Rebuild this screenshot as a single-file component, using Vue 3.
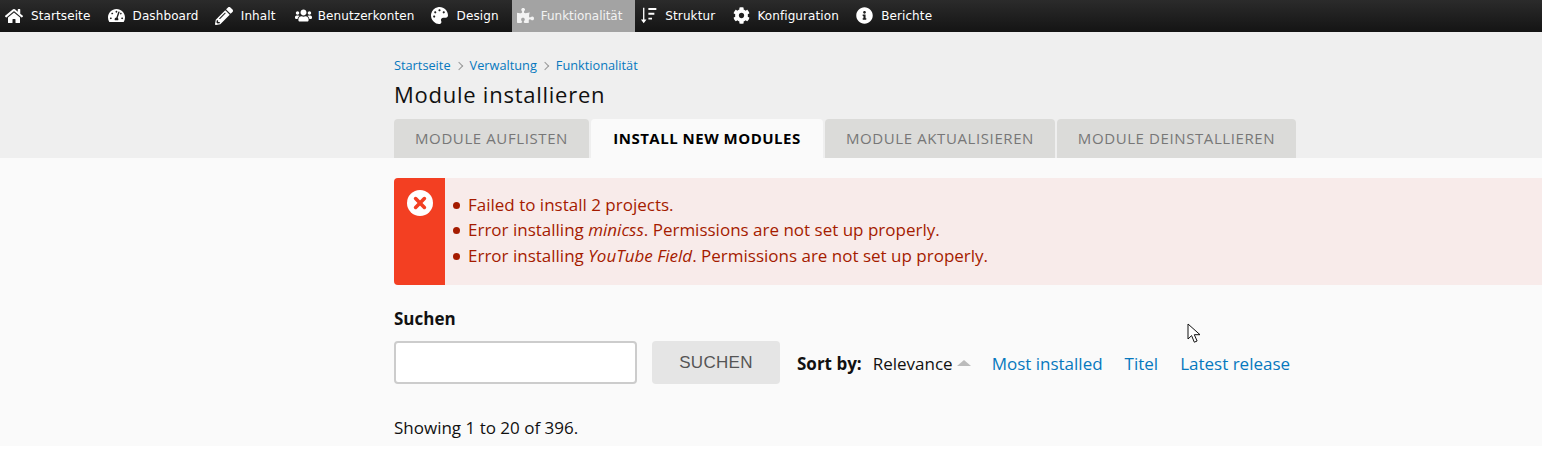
<template>
  <div class="page">
    <nav class="toolbar">
      <a v-for="item in menu" :key="item.label" class="tool" :class="{ active: item.active }">
        <svg class="tool-icon" :style="{ left: item.left + 'px', width: item.size + 'px', height: item.size + 'px' }" :viewBox="item.box">
          <path :d="item.d" fill="currentColor" />
        </svg>
        {{ item.label }}
      </a>
    </nav>

    <header class="head">
      <div class="wrap">
        <ol class="crumbs">
          <li><a>Startseite</a></li>
          <li><a>Verwaltung</a></li>
          <li><a>Funktionalität</a></li>
        </ol>
        <h1>Module installieren</h1>
        <ul class="tabs">
          <li v-for="tab in tabs" :key="tab.label" :class="{ current: tab.current }" :style="{ width: tab.width + 'px' }">{{ tab.label }}</li>
        </ul>
      </div>
    </header>

    <main class="content">
      <div class="message">
        <div class="message-side">
          <svg width="26" height="26" viewBox="0 0 26 26">
            <circle cx="13" cy="13" r="13" fill="#fff" />
            <path d="M8.6 8.6l8.8 8.8M17.4 8.6l-8.8 8.8" stroke="#f33f22" stroke-width="3.6" stroke-linecap="round" />
          </svg>
        </div>
        <ul>
          <li>Failed to install 2 projects.</li>
          <li>Error installing <em>minicss</em>. Permissions are not set up properly.</li>
          <li>Error installing <em>YouTube Field</em>. Permissions are not set up properly.</li>
        </ul>
      </div>

      <label class="search-label" for="search">Suchen</label>
      <div class="search-row">
        <input id="search" type="text" />
        <button type="button">SUCHEN</button>
        <div class="sort">
          <strong>Sort by:</strong>
          <span class="sort-current">Relevance<i class="arrow"></i></span>
          <a>Most installed</a>
          <a>Titel</a>
          <a>Latest release</a>
        </div>
      </div>

      <p class="count">Showing 1 to 20 of 396.</p>

      <svg class="cursor" width="15" height="21" viewBox="0 0 15 21">
        <path d="M1 1v15l3.6-3.4 2.7 6.6 2.8-1.2-2.8-6.3H13z" fill="#fff" stroke="#111" stroke-width="1" />
      </svg>
    </main>
  </div>
</template>

<script setup>
const menu = [
  { label: 'Startseite', left: 3, size: 18, box: '0 0 576 512', d: 'M280.37 148.26L96 300.11V464a16 16 0 0 0 16 16l112.06-.29a16 16 0 0 0 15.92-16V368a16 16 0 0 1 16-16h64a16 16 0 0 1 16 16v95.64a16 16 0 0 0 16 16.05L464 480a16 16 0 0 0 16-16V300L295.67 148.26a12.19 12.19 0 0 0-15.3 0zM571.6 251.47L488 182.56V44.05a12 12 0 0 0-12-12h-56a12 12 0 0 0-12 12v72.61L318.47 43a48 48 0 0 0-61 0L4.34 251.47a12 12 0 0 0-1.6 16.9l25.5 31A12 12 0 0 0 45.15 301l235.22-193.74a12.19 12.19 0 0 1 15.3 0L530.9 301a12 12 0 0 0 16.9-1.6l25.5-31a12 12 0 0 0-1.7-16.93z' },
  { label: 'Dashboard', left: 4, size: 17, box: '0 0 576 512', d: 'M288 32C128.94 32 0 160.94 0 320c0 52.8 14.25 102.26 39.06 144.8 5.61 9.62 16.3 15.2 27.44 15.2h443c11.14 0 21.83-5.58 27.44-15.2C561.75 422.26 576 372.8 576 320c0-159.06-128.94-288-288-288zm0 64c14.71 0 26.58 10.13 30.32 23.65-1.11 2.26-2.64 4.23-3.45 6.67l-9.22 27.67c-5.13 3.49-10.97 6.01-17.64 6.01-17.67 0-32-14.33-32-32S270.33 96 288 96zM96 384c-17.67 0-32-14.33-32-32s14.33-32 32-32 32 14.33 32 32-14.33 32-32 32zm48-160c-17.67 0-32-14.33-32-32s14.33-32 32-32 32 14.33 32 32-14.33 32-32 32zm246.77-72.41l-61.33 184C343.13 347.33 352 364.54 352 384c0 11.72-3.38 22.55-8.88 32H232.88c-5.5-9.45-8.88-20.28-8.88-32 0-33.94 26.5-61.43 59.9-63.59l61.34-184.01c4.17-12.56 17.73-19.45 30.36-15.17 12.57 4.19 19.35 17.79 15.17 30.36zm14.66 57.2l15.52-46.55c3.47-1.29 7.13-2.23 11.05-2.23 17.67 0 32 14.33 32 32s-14.33 32-32 32c-11.38-.01-20.89-6.28-26.57-15.22zM480 384c-17.67 0-32-14.33-32-32s14.33-32 32-32 32 14.33 32 32-14.33 32-32 32z' },
  { label: 'Inhalt', left: 3, size: 18, box: '0 0 512 512', d: 'M497.9 142.1l-46.1 46.1c-4.7 4.7-12.3 4.7-17 0l-111-111c-4.7-4.7-4.7-12.3 0-17l46.1-46.1c18.7-18.7 49.1-18.7 67.9 0l60.1 60.1c18.8 18.7 18.8 49.1 0 67.9zM284.2 99.8L21.6 362.4.4 483.9c-2.9 16.4 11.4 30.6 27.8 27.8l121.5-21.3 262.6-262.6c4.7-4.7 4.7-12.3 0-17l-111-111c-4.8-4.7-12.4-4.7-17.1 0zM124.1 339.9c-5.5-5.5-5.5-14.3 0-19.8l154-154c5.5-5.5 14.3-5.5 19.8 0s5.5 14.3 0 19.8l-154 154c-5.5 5.5-14.3 5.5-19.8 0zM88 424h48v36.3l-64.5 11.3-31.1-31.1L51.7 376H88v48z' },
  { label: 'Benutzerkonten', left: 6, size: 17, box: '0 0 640 512', d: 'M96 224c35.3 0 64-28.7 64-64s-28.7-64-64-64-64 28.7-64 64 28.7 64 64 64zm448 0c35.3 0 64-28.7 64-64s-28.7-64-64-64-64 28.7-64 64 28.7 64 64 64zm32 32h-64c-17.6 0-33.5 7.1-45.1 18.6 40.3 22.1 68.9 62 75.1 109.4h66c17.7 0 32-14.3 32-32v-32c0-35.3-28.7-64-64-64zm-256 0c61.9 0 112-50.1 112-112S381.9 32 320 32 208 82.1 208 144s50.1 112 112 112zm76.8 32h-8.3c-20.8 10-43.9 16-68.5 16s-47.6-6-68.5-16h-8.3C179.6 288 128 339.6 128 403.2V432c0 26.5 21.5 48 48 48h288c26.5 0 48-21.5 48-48v-28.8c0-63.6-51.6-115.2-115.2-115.2zm-223.7-13.4C161.5 263.1 145.6 256 128 256H64c-35.3 0-64 28.7-64 64v32c0 17.7 14.3 32 32 32h65.9c6.3-47.4 34.9-87.3 75.2-109.4z' },
  { label: 'Design', left: 3, size: 17, box: '0 0 512 512', d: 'M204.3 5C104.9 24.4 24.8 104.3 5.2 203.4c-37 187 131.7 326.4 258.8 306.7 41.2-6.4 61.4-54.6 42.5-91.7-23.1-45.4 9.9-98.4 60.9-98.4h79.7c35.8 0 64.8-29.6 64.9-65.3C511.5 97.1 368.1-26.9 204.3 5zM96 320c-17.7 0-32-14.3-32-32s14.3-32 32-32 32 14.3 32 32-14.3 32-32 32zm32-128c-17.7 0-32-14.3-32-32s14.3-32 32-32 32 14.3 32 32-14.3 32-32 32zm128-64c-17.7 0-32-14.3-32-32s14.3-32 32-32 32 14.3 32 32-14.3 32-32 32zm128 64c-17.7 0-32-14.3-32-32s14.3-32 32-32 32 14.3 32 32-14.3 32-32 32z' },
  { label: 'Funktionalität', left: 5, size: 17, active: true, box: '0 0 576 512', d: 'M519.442 288.651c-41.519 0-59.5 31.593-82.058 31.593C377.409 320.244 432 144 432 144s-196.288 80-196.288-3.297c0-35.827 36.288-46.25 36.288-85.985C272 19.216 243.885 0 210.539 0c-34.654 0-66.366 18.891-66.366 56.346 0 41.364 31.711 59.277 31.711 81.75C175.885 207.719 0 166.758 0 166.758v333.237s178.635 41.047 178.635-28.662c0-22.473-40-40.107-40-81.471 0-37.456 29.25-56.346 63.577-56.346 33.673 0 61.788 19.216 61.788 54.717 0 39.735-36.288 50.158-36.288 85.985 0 60.803 129.675 25.73 181.23 25.73 0 0-34.725-120.101 25.827-120.101 35.962 0 46.423 36.152 86.308 36.152C556.712 416 576 387.99 576 354.443c0-34.199-18.962-65.792-56.558-65.792z' },
  { label: 'Struktur', left: 5, size: 17, box: '0 0 512 512', d: 'M92 24h40v352h64L112 488 28 376h64zM252 32h240v56H252zM252 176h180v56H252zM252 320h110v56H252z' },
  { label: 'Konfiguration', left: 5, size: 17, box: '0 0 512 512', d: 'M487.4 315.7l-42.6-24.6c4.3-23.2 4.3-47 0-70.2l42.6-24.6c4.9-2.8 7.1-8.6 5.5-14-11.1-35.6-30-67.8-54.7-94.6-3.8-4.1-10-5.1-14.8-2.3L380.8 110c-17.9-15.4-38.5-27.3-60.8-35.1V25.8c0-5.6-3.9-10.5-9.4-11.7-36.7-8.2-74.3-7.8-109.2 0-5.5 1.2-9.4 6.1-9.4 11.7V75c-22.2 7.9-42.8 19.8-60.8 35.1L88.7 85.5c-4.9-2.8-11-1.9-14.8 2.3-24.7 26.7-43.6 58.9-54.7 94.6-1.7 5.4.6 11.2 5.5 14L67.3 221c-4.3 23.2-4.3 47 0 70.2l-42.6 24.6c-4.9 2.8-7.1 8.6-5.5 14 11.1 35.6 30 67.8 54.7 94.6 3.8 4.1 10 5.1 14.8 2.3l42.6-24.6c17.9 15.4 38.5 27.3 60.8 35.1v49.2c0 5.6 3.9 10.5 9.4 11.7 36.7 8.2 74.3 7.8 109.2 0 5.5-1.2 9.4-6.1 9.4-11.7v-49.2c22.2-7.9 42.8-19.8 60.8-35.1l42.6 24.6c4.9 2.8 11 1.9 14.8-2.3 24.7-26.7 43.6-58.9 54.7-94.6 1.5-5.5-.7-11.3-5.6-14.1zM256 336c-44.1 0-80-35.9-80-80s35.9-80 80-80 80 35.9 80 80-35.9 80-80 80z' },
  { label: 'Berichte', left: 4, size: 17, box: '0 0 512 512', d: 'M256 8C119.043 8 8 119.083 8 256c0 136.997 111.043 248 248 248s248-111.003 248-248C504 119.083 392.957 8 256 8zm0 110c23.196 0 42 18.804 42 42s-18.804 42-42 42-42-18.804-42-42 18.804-42 42-42zm56 254c0 6.627-5.373 12-12 12h-88c-6.627 0-12-5.373-12-12v-24c0-6.627 5.373-12 12-12h12v-64h-12c-6.627 0-12-5.373-12-12v-24c0-6.627 5.373-12 12-12h64c6.627 0 12 5.373 12 12v100h12c6.627 0 12 5.373 12 12v24z' },
]

const tabs = [
  { label: 'Module auflisten', width: 195 },
  { label: 'Install new modules', width: 232, current: true },
  { label: 'Module aktualisieren', width: 230 },
  { label: 'Module deinstallieren', width: 239 },
]
</script>

<style>
html,
body {
  margin: 0;
  background: #fff;
}
</style>

<style scoped>
.page {
  font-family: "Open Sans", "Noto Sans", sans-serif;
  font-size: 17px;
  color: #111;
}
.toolbar {
  display: flex;
  height: 32px;
  padding-left: 2px;
  background: linear-gradient(#2b2b2b, #141414);
}
.tool {
  position: relative;
  padding: 0 13.2px 0 29px;
  font-family: "DejaVu Sans", Verdana, sans-serif;
  font-size: 12px;
  letter-spacing: 0.1px;
  line-height: 32px;
  color: #fff;
  white-space: nowrap;
}
.tool.active {
  background: #a3a3a3;
  color: #f2f2f2;
  letter-spacing: -0.05px;
  padding-right: 13px;
}
.tool.active + .tool {
  padding-left: 30px;
}
.tool-icon {
  position: absolute;
  top: 7px;
}
.head {
  height: 126px;
  background: #efefef;
}
.wrap {
  margin-left: 394px;
}
.crumbs {
  display: flex;
  margin: 0;
  padding: 25px 0 0;
  list-style: none;
  font-size: 12.75px;
  line-height: 17px;
}
.crumbs li + li::before {
  content: "";
  display: inline-block;
  width: 5px;
  height: 5px;
  margin: 0 8px 1px 5px;
  border-top: 1.5px solid #999;
  border-right: 1.5px solid #999;
  transform: rotate(45deg);
}
.crumbs a {
  color: #0678be;
}
h1 {
  margin: 5px 0 0;
  font-size: 22px;
  font-weight: 400;
  line-height: 30px;
  letter-spacing: 0.75px;
  color: #111;
}
.tabs {
  display: flex;
  gap: 2px;
  margin: 10px 0 0;
  padding: 0;
  list-style: none;
}
.tabs li {
  height: 39px;
  box-sizing: border-box;
  border-radius: 4px 4px 0 0;
  background: #dbdbd9;
  color: #777;
  font-size: 15px;
  font-weight: 400;
  line-height: 39px;
  letter-spacing: 0.6px;
  text-align: center;
  text-transform: uppercase;
  white-space: nowrap;
}
.tabs li.current {
  background: #fafafa;
  color: #000;
  font-weight: 700;
  letter-spacing: 0.5px;
}
.content {
  position: relative;
  height: 288px;
  box-sizing: border-box;
  padding: 20px 0 0 394px;
  background: #fafafa;
}
.message {
  display: flex;
  height: 107px;
  border-radius: 4px 0 0 4px;
  background: #f8ebea;
  color: #a51b00;
}
.message-side {
  flex: 0 0 51px;
  box-sizing: border-box;
  padding: 12px 0 0 13px;
  border-radius: 4px 0 0 4px;
  background: #f33f22;
}
.message ul {
  margin: 0;
  padding: 14px 0 0 23px;
  list-style: none;
  line-height: 25.4px;
}
.message li::before {
  content: "";
  display: inline-block;
  width: 7px;
  height: 7px;
  margin: 0 8px 2px -15px;
  border-radius: 50%;
  background: #a51b00;
}
.search-label {
  display: block;
  margin-top: 22px;
  font-weight: 700;
  line-height: 24px;
}
.search-row {
  display: flex;
  align-items: flex-start;
  margin-top: 10px;
}
.search-row input {
  width: 243px;
  height: 43px;
  box-sizing: border-box;
  border: 2px solid #ccc;
  border-radius: 4px;
  background: #fff;
}
.search-row button {
  width: 128px;
  height: 43px;
  margin-left: 15px;
  border: 0;
  border-radius: 4px;
  background: #e5e5e5;
  color: #555;
  font-family: "Liberation Sans", Arial, sans-serif;
  font-size: 17px;
  letter-spacing: 0.3px;
}
.sort {
  display: flex;
  align-items: center;
  height: 45px;
  margin-left: 17px;
}
.sort strong {
  font-weight: 700;
}
.sort-current {
  margin-left: 11px;
  color: #111;
}
.arrow {
  display: inline-block;
  margin: 0 0 4px 4px;
  border: 7px solid transparent;
  border-top: 0;
  border-bottom: 6px solid #bbb;
}
.sort a {
  margin-left: 22px;
  color: #0678be;
}
.sort .sort-current + a {
  margin-left: 21px;
}
.count {
  margin: 30px 0 0;
  line-height: 24px;
}
.cursor {
  position: absolute;
  left: 1187px;
  top: 165px;
}
</style>
